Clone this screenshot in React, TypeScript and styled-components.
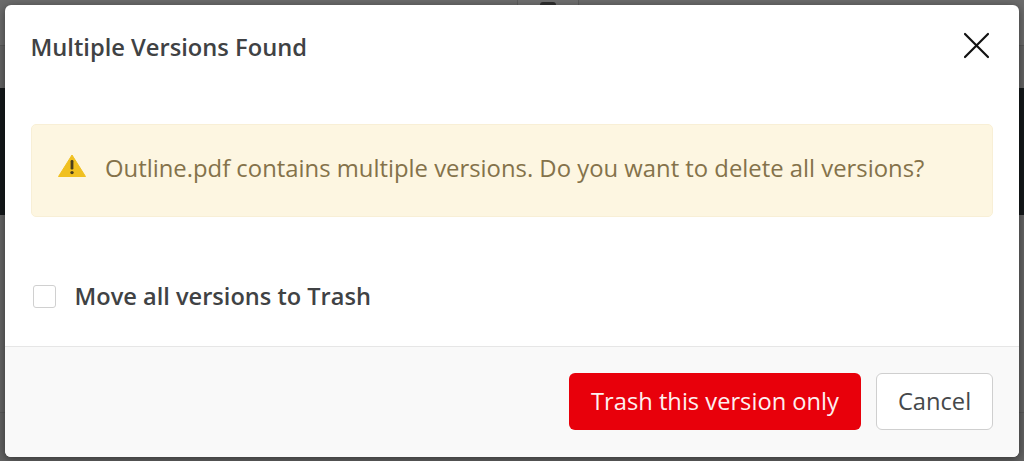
import React from 'react';
import styled, { createGlobalStyle } from 'styled-components';

const Global = createGlobalStyle`
  html, body { margin: 0; padding: 0; background: #636363; }
  body { font-family: "Open Sans", "Liberation Sans", sans-serif; }
  * { box-sizing: border-box; }
`;

const Page = styled.div`
  position: relative;
  width: 1024px;
  height: 461px;
  overflow: hidden;
  display: flex;
  flex-direction: column;
`;

const Band = styled.div<{ $h: number; $bg: string; $line?: boolean }>`
  flex: 0 0 ${p => p.$h}px;
  background: ${p => p.$bg};
  border-bottom: ${p => (p.$line ? '1px solid #585858' : 'none')};
`;

const TopBand = styled(Band)`
  display: flex;
  justify-content: center;
`;

const TopTab = styled.div`
  width: 62px;
  height: 5px;
  margin-left: 71px;
  border-left: 1px solid #5c5c5c;
  border-right: 1px solid #5c5c5c;
  background: #6f6f6f;
  display: flex;
  justify-content: center;
  align-items: flex-end;
  overflow: hidden;
`;

const TopDot = styled.div`
  width: 16px;
  height: 3px;
  border-radius: 8px 8px 0 0;
  background: #2f2f2f;
`;

const Dialog = styled.div`
  position: absolute;
  left: 5px;
  top: 5px;
  width: 1014px;
  height: 452px;
  background: #fff;
  border-radius: 6px;
  box-shadow: 0 2px 8px rgba(0, 0, 0, 0.45);
  display: flex;
  flex-direction: column;
  overflow: hidden;
`;

const Header = styled.div`
  flex: 0 0 83px;
  padding: 0 29px 0 25.5px;
  display: flex;
  align-items: center;
  justify-content: space-between;
`;

const Title = styled.h2`
  margin: 0;
  font-size: 23.7px;
  line-height: 32px;
  font-weight: 600;
  color: #404244;
`;

const CloseIcon = styled.svg`
  width: 27px;
  height: 27px;
  display: block;
  margin-bottom: 2px;
`;

const Body = styled.div`
  flex: 1;
  padding: 36px 26px 0;
  display: flex;
  flex-direction: column;
`;

const Alert = styled.div`
  height: 93px;
  background: #fdf6e1;
  border: 1px solid #f8efd6;
  border-radius: 5px;
  padding: 0 0 6px 26px;
  display: flex;
  align-items: center;
  gap: 19px;
`;

const AlertIcon = styled.svg`
  flex: none;
  margin-bottom: 4px;
`;

const AlertText = styled.span`
  font-size: 23.85px;
  line-height: 32px;
  color: #84724a;
  white-space: nowrap;
`;

const CheckRow = styled.label`
  margin-top: 68px;
  padding-left: 2px;
  display: flex;
  align-items: center;
  gap: 18.5px;
`;

const Box = styled.span`
  width: 23px;
  height: 23px;
  border: 1.5px solid #d0d0d0;
  border-radius: 3px;
  background: #fff;
`;

const CheckLabel = styled.span`
  font-size: 23.6px;
  line-height: 23px;
  font-weight: 600;
  color: #404244;
`;

const Footer = styled.div`
  flex: 0 0 111px;
  background: #f9f9f9;
  border-top: 1.5px solid #e6e6e6;
  padding: 26px 26px 0 0;
  display: flex;
  justify-content: flex-end;
  align-items: flex-start;
  gap: 15px;
`;

const Button = styled.button<{ $primary?: boolean }>`
  height: 57px;
  width: ${p => (p.$primary ? 292 : 117)}px;
  padding: 0 0 1px;
  font-family: inherit;
  font-size: 23.7px;
  border-radius: 6px;
  border: ${p => (p.$primary ? 'none' : '1.5px solid #cfcfcf')};
  background: ${p => (p.$primary ? '#e8000b' : '#fff')};
  color: ${p => (p.$primary ? '#fdf0f0' : '#45484a')};
`;

export default function App() {
  return (
    <Page>
      <Global />
      <TopBand $h={46} $bg="#6b6b6b" $line>
        <TopTab><TopDot /></TopTab>
      </TopBand>
      <Band $h={42} $bg="#636363" />
      <Band $h={127} $bg="#14181a" />
      <Band $h={198} $bg="#646464" $line />
      <Band $h={48} $bg="#626262" />

      <Dialog role="dialog">
        <Header>
          <Title>Multiple Versions Found</Title>
          <CloseIcon viewBox="0 0 27 27" fill="none" stroke="#111" strokeWidth="2.2" strokeLinecap="round">
            <path d="M2 2 L25 25 M25 2 L2 25" />
          </CloseIcon>
        </Header>
        <Body>
          <Alert>
            <AlertIcon width="28" height="23" viewBox="0 0 28 23">
              <path d="M14 1 L27.5 22.5 H0.5 Z" fill="#f0c020" stroke="#f0c020" strokeLinejoin="round" />
              <rect x="12.6" y="6" width="2.8" height="9.5" rx="1.2" fill="#4a3f1e" />
              <circle cx="14" cy="18.6" r="1.7" fill="#4a3f1e" />
            </AlertIcon>
            <AlertText>Outline.pdf contains multiple versions. Do you want to delete all versions?</AlertText>
          </Alert>
          <CheckRow>
            <Box />
            <CheckLabel>Move all versions to Trash</CheckLabel>
          </CheckRow>
        </Body>
        <Footer>
          <Button $primary>Trash this version only</Button>
          <Button>Cancel</Button>
        </Footer>
      </Dialog>
    </Page>
  );
}
